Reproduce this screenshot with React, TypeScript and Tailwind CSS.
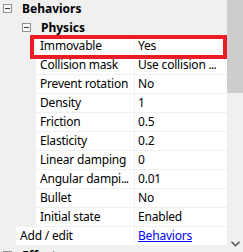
import React from 'react';

type Prop = { name: string; value: string; link?: boolean };

// names/values as shown in the grid (the grid clips them itself)
const physics: Prop[] = [
  { name: 'Immovable', value: 'Yes' },
  { name: 'Collision mask', value: 'Use collision ...' },
  { name: 'Prevent rotation', value: 'No' },
  { name: 'Density', value: '1' },
  { name: 'Friction', value: '0.5' },
  { name: 'Elasticity', value: '0.2' },
  { name: 'Linear damping', value: '0' },
  { name: 'Angular dampi...', value: '0.01' },
  { name: 'Bullet', value: 'No' },
  { name: 'Initial state', value: 'Enabled' },
];

// keeps the trailing dots tight, like the native grid's ellipsis
function Clipped({ text }: { text: string }) {
  if (!text.endsWith('...')) return <>{text}</>;
  return (
    <>
      {text.slice(0, -3)}
      <span className="tracking-[-0.8px]">...</span>
    </>
  );
}

function MinusBox() {
  return (
    <svg width="9" height="9" viewBox="0 0 9 9" className="shrink-0">
      <rect x="0.5" y="0.5" width="8" height="8" fill="#f7f7f7" stroke="#919191" />
      <rect x="2" y="4" width="5" height="1" fill="#3c3c3c" />
    </svg>
  );
}

function GroupRow({ label, indent }: { label: string; indent: string }) {
  return (
    <div className={`flex items-center h-[19px] ${indent}`}>
      <MinusBox />
      <span className="ml-[10px] font-bold">{label}</span>
    </div>
  );
}

function PropRow({ prop, indent }: { prop: Prop; indent: string }) {
  return (
    <div className={`flex h-[19px] pb-px tracking-[-0.2px] ${indent}`}>
      <div className="flex-1 min-w-0 bg-white pl-[4px] leading-[18px] whitespace-nowrap overflow-hidden">
        <Clipped text={prop.name} />
      </div>
      <div className="w-[92px] ml-px bg-white pl-[3px] leading-[18px] whitespace-nowrap overflow-hidden">
        {prop.link ? <span className="text-[#0000ff] underline">{prop.value}</span> : <Clipped text={prop.value} />}
      </div>
    </div>
  );
}

export default function App() {
  return (
    <div
      className="relative w-[243px] h-[252px] overflow-hidden bg-[#f0f0f0] flex text-[12px] text-black"
      style={{ fontFamily: '"Noto Sans", "Open Sans", sans-serif' }}
    >
      <div className="w-[227px] -mt-px">
        <GroupRow label="Behaviors" indent="pl-[3px]" />
        <GroupRow label="Physics" indent="pl-[22px]" />
        {physics.map((p) => (
          <PropRow key={p.name} prop={p} indent="pl-[36px]" />
        ))}
        <PropRow prop={{ name: 'Add / edit', value: 'Behaviors', link: true }} indent="pl-[16px]" />
        <GroupRow label="Effects" indent="pl-[3px]" />
      </div>

      {/* scrollbar */}
      <div className="w-[16px] flex flex-col">
        <div className="h-[93px] bg-[#cdcdcd]" />
        <div className="flex-1" />
        <div className="h-[16px] flex items-center justify-center">
          <svg width="9" height="6" viewBox="0 0 9 6">
            <path d="M0.5 0.8 L4.5 4.6 L8.5 0.8" fill="none" stroke="#606060" strokeWidth="1.6" />
          </svg>
        </div>
      </div>

      {/* highlight annotation */}
      <div className="absolute left-[30px] top-[35px] w-[197px] h-[24px] border-[4px] border-[#ed1c24] pointer-events-none" />
    </div>
  );
}
